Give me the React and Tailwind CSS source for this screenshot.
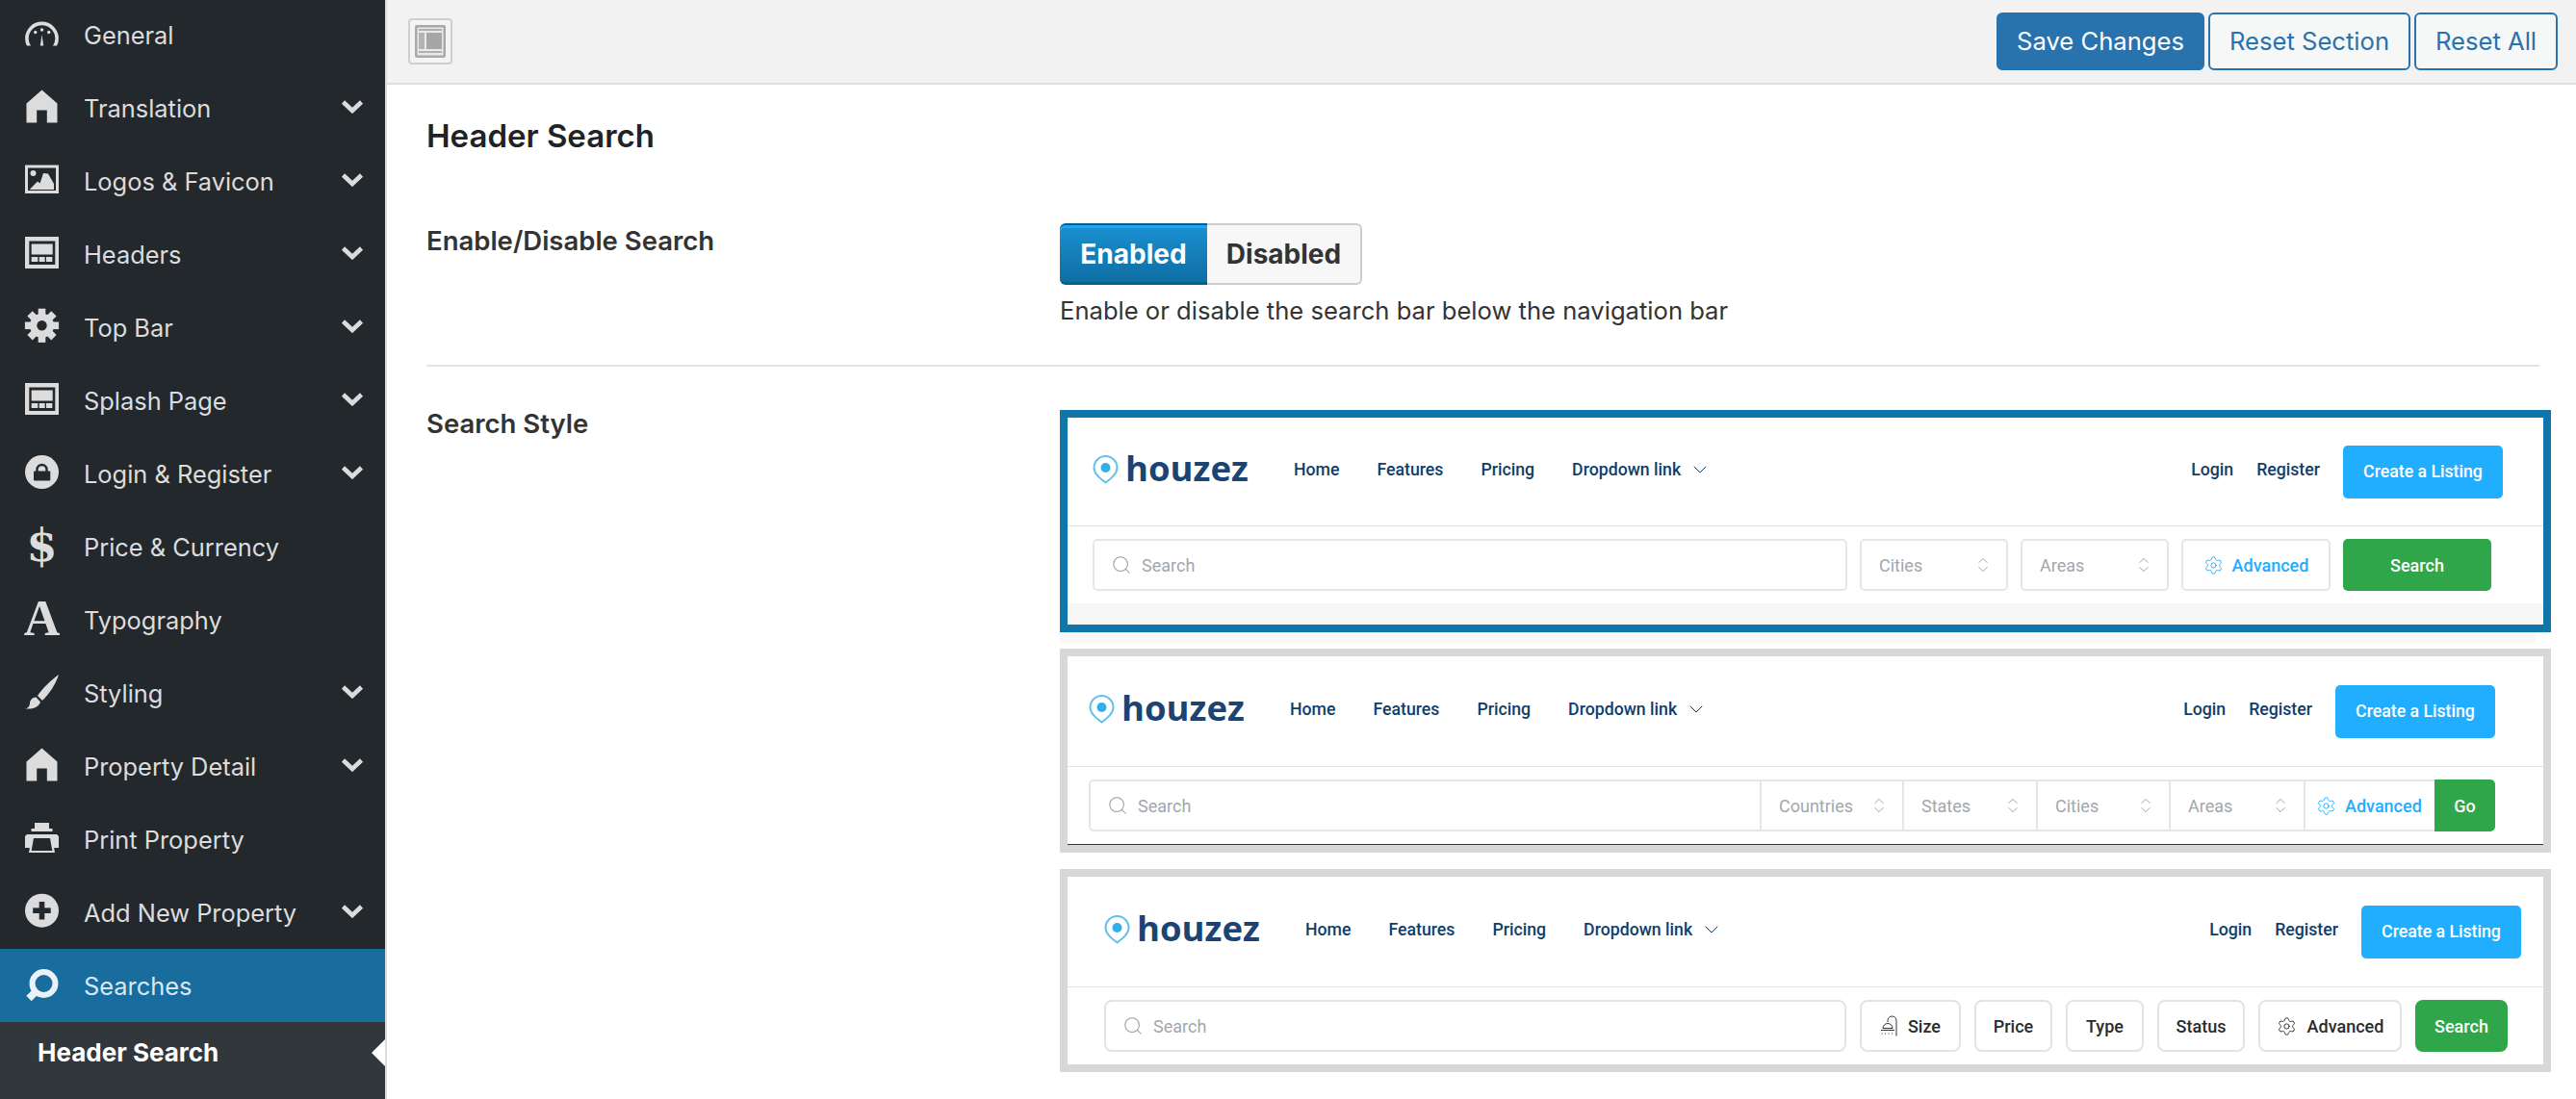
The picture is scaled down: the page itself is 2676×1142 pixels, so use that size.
import React from "react";
import { Search, ChevronDown, ChevronsUpDown, Settings } from "lucide-react";

const LIGHT = "#dcdcdc";
const DARK = "#23282d";

function Svg({ children, className = "" }) {
  return (
    <svg width="35" height="35" viewBox="0 0 35 35" className={`overflow-visible shrink-0 ${className}`}>
      {children}
    </svg>
  );
}

function GaugeIcon() {
  return (
    <Svg>
      <clipPath id="gauge-clip">
        <rect x="-1" y="0" width="37" height="28.5" />
      </clipPath>
      <circle cx="17.5" cy="21" r="15.6" fill="none" stroke={LIGHT} strokeWidth="3.6" clipPath="url(#gauge-clip)" />
      <circle cx="10.7" cy="14.5" r="1.7" fill={LIGHT} />
      <circle cx="17.5" cy="12" r="1.7" fill={LIGHT} />
      <circle cx="24.7" cy="14.5" r="1.7" fill={LIGHT} />
      <path d="M17.5 17L19.2 28.5H15.8Z" fill={LIGHT} />
    </Svg>
  );
}

function HomeIcon() {
  return (
    <Svg>
      <path d="M17.5 -1.5L33.5 12.5V32.5H22.8V19.5H12.2V32.5H1.5V12.5Z" fill={LIGHT} />
    </Svg>
  );
}

function ImageIcon() {
  return (
    <Svg>
      <path fillRule="evenodd" d="M0 .5H35V30H0ZM3 3.5V27H32V3.5Z" fill={LIGHT} />
      <circle cx="8.5" cy="9" r="3" fill={LIGHT} />
      <path d="M4.7 26L13 17.5L15.5 19.5L19 9L24 9.5L30 20V26Z" fill={LIGHT} />
    </Svg>
  );
}

function LayoutIcon() {
  return (
    <Svg>
      <path fillRule="evenodd" d="M0 -1H35V32H0ZM4.3 3.5V28H31.3V3.5Z" fill={LIGHT} />
      <rect x="6.7" y="6.5" width="22" height="11" fill={LIGHT} />
      <rect x="6.7" y="20" width="6.6" height="5" fill={LIGHT} />
      <rect x="14.7" y="20" width="6" height="5" fill={LIGHT} />
      <rect x="22" y="20" width="6.3" height="5" fill={LIGHT} />
    </Svg>
  );
}

function GearIcon() {
  return (
    <Svg>
      {[0, 45, 90, 135, 180, 225, 270, 315].map((deg) => (
        <rect key={deg} x="13.7" y="-2.3" width="7.6" height="10" fill={LIGHT} transform={`rotate(${deg} 17.5 15.3)`} />
      ))}
      <circle cx="17.5" cy="15.3" r="12.5" fill={LIGHT} />
      <circle cx="17.5" cy="15.3" r="5.2" fill={DARK} />
    </Svg>
  );
}

function LockIcon() {
  return (
    <Svg>
      <circle cx="17.5" cy="15.5" r="17.5" fill={LIGHT} />
      <rect x="9" y="14.5" width="17.3" height="10" rx="1" fill={DARK} />
      <path d="M12.5 15V13a5 5 0 0 1 10 0V15" fill="none" stroke={DARK} strokeWidth="2.4" />
    </Svg>
  );
}

function DollarIcon() {
  return (
    <span className="w-[35px] h-[35px] shrink-0 flex items-center justify-center text-[46px] leading-none font-bold font-['DejaVu_Serif',serif] -mt-[3px]">
      $
    </span>
  );
}

function TypeIcon() {
  return (
    <span className="w-[35px] h-[35px] shrink-0 flex items-center justify-center text-[52px] leading-none font-bold font-['Liberation_Serif',serif] -mt-[3px]">
      A
    </span>
  );
}

function BrushIcon() {
  return (
    <Svg>
      <path d="M35 -2C28 3 18 12 13 20L18 25C25 18 32 8 35 -2Z" fill={LIGHT} />
      <path d="M11.5 21.5C7.5 21.5 5 24.5 5 28C5 31 3 32.8 .5 33.4C6 34.2 14 33 16 26.5Z" fill={LIGHT} />
    </Svg>
  );
}

function PrintIcon() {
  return (
    <Svg>
      <rect x="10" y="0" width="15" height="6.5" fill={LIGHT} />
      <rect x="6.5" y="6" width="22" height="3" fill={LIGHT} />
      <path d="M2 12H33L35 14V26H0V14Z" fill={LIGHT} />
      <path d="M7 14H28L31 31H4Z" fill={LIGHT} />
      <path d="M9 16H26L28.3 29H6.7Z" fill={DARK} />
    </Svg>
  );
}

function PlusIcon() {
  return (
    <Svg>
      <circle cx="17.5" cy="15.2" r="17.5" fill={LIGHT} />
      <rect x="14.7" y="6" width="5.6" height="18.5" fill={DARK} />
      <rect x="8.2" y="12.4" width="18.5" height="5.6" fill={DARK} />
    </Svg>
  );
}

function LensIcon() {
  return (
    <Svg>
      <circle cx="19.5" cy="15" r="12" fill="none" stroke="#eaf2f7" strokeWidth="6" />
      <path d="M11 23.500L4 30.500" fill="none" stroke="#eaf2f7" strokeWidth="7.500" />
    </Svg>
  );
}

function MenuChevron() {
  return (
    <svg width="24" height="15" viewBox="0 0 24 15" className="ml-auto mr-[22px] -mt-[4px] shrink-0">
      <path d="M2.5 3L12 12L21.5 3" fill="none" stroke={LIGHT} strokeWidth="4.6" />
    </svg>
  );
}

const menu = [
  { label: "General", icon: GaugeIcon },
  { label: "Translation", icon: HomeIcon, more: true },
  { label: "Logos & Favicon", icon: ImageIcon, more: true },
  { label: "Headers", icon: LayoutIcon, more: true },
  { label: "Top Bar", icon: GearIcon, more: true },
  { label: "Splash Page", icon: LayoutIcon, more: true },
  { label: "Login & Register", icon: LockIcon, more: true },
  { label: "Price & Currency", icon: DollarIcon },
  { label: "Typography", icon: TypeIcon },
  { label: "Styling", icon: BrushIcon, more: true },
  { label: "Property Detail", icon: HomeIcon, more: true },
  { label: "Print Property", icon: PrintIcon },
  { label: "Add New Property", icon: PlusIcon, more: true },
];

function Sidebar() {
  return (
    <aside className="w-[400px] h-full shrink-0 bg-[#23282d] text-[#dcdcdc] text-[25.4px] overflow-hidden flex flex-col">
      <div className="-mt-[2px]">
        {menu.map((item) => {
          const Icon = item.icon;
          return (
            <div key={item.label} className="h-[76px] flex items-center pl-[26px]">
              <Icon />
              <span className="ml-[26px] mt-[2px] whitespace-nowrap">{item.label}</span>
              {item.more && <MenuChevron />}
            </div>
          );
        })}
        <div className="h-[76px] flex items-center pl-[26px] bg-[#186d9e] text-[#d8e8f2]">
          <LensIcon />
          <span className="ml-[26px] mt-[2px]">Searches</span>
        </div>
      </div>
      <div className="relative flex-1 bg-[#32373c] pl-[39px] pt-[14px] text-[26px] text-white font-bold leading-[36px]">
        Header Search
        <svg width="14" height="28" viewBox="0 0 14 28" className="absolute right-0 top-[18px]">
          <path d="M14 0V28L0 14Z" fill="#fff" />
        </svg>
      </div>
    </aside>
  );
}

function LayoutButton() {
  return (
    <div className="w-[46px] h-[48px] rounded-[4px] border-2 border-[#cfcfcf] bg-[#f4f4f4] flex items-center justify-center">
      <svg width="32" height="34" viewBox="0 0 32 34">
        <rect width="32" height="34" rx="2" fill="#a9a9a9" />
        <rect x="2.5" y="2.5" width="27" height="29" fill="#e9e9e9" />
        <rect x="4" y="4" width="24" height="2" fill="#b0b0b0" />
        <rect x="4" y="8" width="6" height="17" fill="#b4b4b4" />
        <rect x="12" y="8" width="16" height="17" fill="#a6a6a6" />
        <rect x="4" y="27" width="24" height="2" fill="#b0b0b0" />
      </svg>
    </div>
  );
}

function TopBar() {
  return (
    <div className="h-[88px] shrink-0 bg-[#f2f2f2] border-b-2 border-[#dedede] flex items-center pl-[22px] pr-[19px]">
      <LayoutButton />
      <div className="ml-auto flex gap-[4px] text-[25.6px]">
        <button className="w-[216px] h-[60px] rounded-[6px] bg-[#2872ae] text-white">Save Changes</button>
        <button className="w-[210px] h-[60px] rounded-[6px] border-2 border-[#2872ae] bg-[#f6f7f7] text-[#2872ae]">Reset Section</button>
        <button className="w-[149px] h-[60px] rounded-[6px] border-2 border-[#2872ae] bg-[#f6f7f7] text-[#2872ae]">Reset All</button>
      </div>
    </div>
  );
}

function Logo() {
  return (
    <div className="flex items-center shrink-0 w-[163px]">
      <svg width="27" height="30" viewBox="0 0 27 30" className="shrink-0 -mt-[4px]">
        <path d="M13.5 28.5C7 23.5 1.5 19 1.5 13A12 12 0 0 1 25.5 13C25.5 19 20 23.5 13.5 28.5Z" fill="none" stroke="#63c0ea" strokeWidth="2" />
        <circle cx="13.5" cy="13" r="5" fill="#35aee6" />
      </svg>
      <span className="ml-[7px] text-[#1c4473] text-[36.5px] leading-none font-bold font-['Open_Sans',sans-serif] -mt-[7px]">houzez</span>
    </div>
  );
}

function SiteHeader({ className }) {
  return (
    <div className={`flex items-center border-b border-[#dde3e6] text-[17.7px] font-medium text-[#0f3e6b] font-[Roboto,sans-serif] ${className}`}>
      <Logo />
      <div className="ml-[46px] mb-[4px] flex items-center gap-[39px]">
        <span>Home</span>
        <span>Features</span>
        <span>Pricing</span>
        <span className="flex items-center gap-[8px]">
          Dropdown link
          <ChevronDown size={24} strokeWidth={1} />
        </span>
      </div>
      <div className="ml-auto flex items-center gap-[24px]">
        <span className="mb-[4px]">Login</span>
        <span className="mb-[4px]">Register</span>
        <span className="w-[166px] h-[55px] rounded-[5px] bg-[#22aeff] text-white flex items-center justify-center">Create a Listing</span>
      </div>
    </div>
  );
}

function SearchField({ className }) {
  return (
    <div className={`h-[54px] flex items-center pl-[17px] text-[18px] text-[#a3a7ab] ${className}`}>
      <Search size={22} strokeWidth={1.1} className="text-[#9a9a9a]" />
      <span className="ml-[10px]">Search</span>
    </div>
  );
}

function Select({ label, className }) {
  return (
    <div className={`h-[54px] flex items-center justify-between pl-[18px] pr-[14px] text-[18px] text-[#a3a7ab] ${className}`}>
      {label}
      <ChevronsUpDown size={20} strokeWidth={1} className="text-[#8f8f8f]" />
    </div>
  );
}

function AdvancedBlue({ className }) {
  return (
    <div className={`h-[54px] flex items-center gap-[9px] text-[18px] font-medium text-[#22aeff] ${className}`}>
      <Settings size={21} strokeWidth={1.1} />
      Advanced
    </div>
  );
}

function StyleOne() {
  return (
    <div className="w-[1549px] h-[231px] border-8 border-[#1075a8] bg-white">
      <SiteHeader className="h-[113px] pl-[26px] pr-[42px]" />
      <div className="h-[80px] pt-[13px] pl-[26px] flex gap-[13px] font-[Roboto,sans-serif]">
        <SearchField className="w-[784px] rounded-[5px] border-2 border-[#e4e7e9]" />
        <Select label="Cities" className="w-[154px] rounded-[5px] border-2 border-[#e4e7e9]" />
        <Select label="Areas" className="w-[154px] rounded-[5px] border-2 border-[#e4e7e9]" />
        <AdvancedBlue className="w-[155px] justify-center rounded-[5px] border-2 border-[#e4e7e9]" />
        <div className="w-[154px] h-[54px] rounded-[5px] bg-[#2fa64a] text-white text-[18px] font-medium flex items-center justify-center">Search</div>
      </div>
      <div className="h-[22px] bg-[#f7f7f7]" />
    </div>
  );
}

function StyleTwo() {
  return (
    <div className="w-[1549px] h-[212px] border-8 border-[#d8d8d8] bg-white">
      <SiteHeader className="h-[115px] pl-[22px] pr-[50px]" />
      <div className="h-[80px] pt-[13px] pl-[22px] font-[Roboto,sans-serif]">
        <div className="w-[1461px] h-[54px] flex rounded-[5px]">
          <SearchField className="w-[697px] border-2 border-r-0 border-[#e4e7e9] rounded-l-[5px]" />
          <Select label="Countries" className="w-[148px] border-y-2 border-l-2 border-[#e4e7e9]" />
          <Select label="States" className="w-[139px] border-y-2 border-l-2 border-[#e4e7e9]" />
          <Select label="Cities" className="w-[138px] border-y-2 border-l-2 border-[#e4e7e9]" />
          <Select label="Areas" className="w-[140px] border-y-2 border-l-2 border-[#e4e7e9]" />
          <AdvancedBlue className="w-[136px] pl-[11px] border-y-2 border-l-2 border-[#e4e7e9]" />
          <div className="w-[63px] h-[54px] rounded-r-[5px] bg-[#2fa64a] text-white text-[18px] font-medium flex items-center justify-center">Go</div>
        </div>
      </div>
      <div className="h-px bg-[#0f3e6b]" />
    </div>
  );
}

function ShowerIcon() {
  return (
    <svg width="18" height="22" viewBox="0 0 18 22" fill="none" stroke="#333" strokeWidth="1">
      <path d="M17 21.5V5.5a4.5 4.5 0 0 0-9 0V7" />
      <path d="M3 13.5a5 5 0 0 1 10 0ZM1 15.5H15" />
      <path d="M2 18.5V20M5.500 18.500V20M9 18.500V20M12.500 18.500V20" strokeDasharray="1 1.500" />
    </svg>
  );
}

function FilterButton({ className, children }) {
  return (
    <div className={`h-[54px] rounded-[8px] border-2 border-[#e3e3e3] flex items-center justify-center gap-[11px] text-[18px] font-medium text-[#2b2b2b] ${className}`}>
      {children}
    </div>
  );
}

function StyleThree() {
  return (
    <div className="w-[1549px] h-[211px] border-8 border-[#d8d8d8] bg-white">
      <SiteHeader className="h-[115px] pl-[38px] pr-[23px]" />
      <div className="h-[80px] pt-[13px] pl-[38px] flex gap-[14px] font-[Roboto,sans-serif]">
        <SearchField className="w-[771px] rounded-[8px] border-2 border-[#e3e3e3]" />
        <FilterButton className="w-[105px]">
          <ShowerIcon />
          Size
        </FilterButton>
        <FilterButton className="w-[81px]">Price</FilterButton>
        <FilterButton className="w-[81px]">Type</FilterButton>
        <FilterButton className="w-[91px]">Status</FilterButton>
        <FilterButton className="w-[149px]">
          <Settings size={21} strokeWidth={1.1} />
          Advanced
        </FilterButton>
        <div className="w-[96px] h-[54px] rounded-[8px] bg-[#2fa64a] text-white text-[18px] font-medium flex items-center justify-center">Search</div>
      </div>
    </div>
  );
}

function Toggle() {
  return (
    <div className="flex h-[64px] text-[28px] font-bold">
      <div className="w-[153px] rounded-l-[6px] bg-linear-to-b from-[#1a90d2] to-[#0f6ea4] border-t-2 border-b-[3px] border-[#00608f] shadow-[inset_0_3px_0_#23a4ef] text-white flex items-center justify-center">
        Enabled
      </div>
      <div className="w-[161px] rounded-r-[6px] bg-[#f7f7f7] border-2 border-l-0 border-[#cccccc] text-[#333] flex items-center justify-center">
        Disabled
      </div>
    </div>
  );
}

export default function App() {
  return (
    <div className="w-[2676px] h-[1142px] flex overflow-hidden bg-white font-[Inter,sans-serif]">
      <Sidebar />
      <main className="flex-1 min-w-0 border-l-2 border-[#dddddd] flex flex-col">
        <TopBar />
        <div className="pl-[41px]">
          <h1 className="mt-[33px] text-[33px] leading-[40px] font-semibold text-[#1d2327]">Header Search</h1>

          <div className="mt-[71px] flex">
            <div className="w-[658px] text-[27.5px] leading-[36px] font-semibold text-[#333]">Enable/Disable Search</div>
            <div>
              <Toggle />
              <p className="mt-[9px] text-[25.6px] leading-[36px] text-[#333]">Enable or disable the search bar below the navigation bar</p>
            </div>
          </div>

          <div className="mt-[38px] w-[2195px] h-[2px] bg-[#e4e4e4]" />

          <div className="mt-[45px] flex">
            <div className="w-[658px] -mt-[4px] text-[27.5px] leading-[36px] font-semibold text-[#333]">Search Style</div>
            <div className="flex flex-col">
              <StyleOne />
              <div className="w-[1533px] h-[11px] bg-[#f8f8f8]" />
              <div className="mt-[6px]">
                <StyleTwo />
              </div>
              <div className="mt-[17px]">
                <StyleThree />
              </div>
            </div>
          </div>
        </div>
      </main>
    </div>
  );
}
